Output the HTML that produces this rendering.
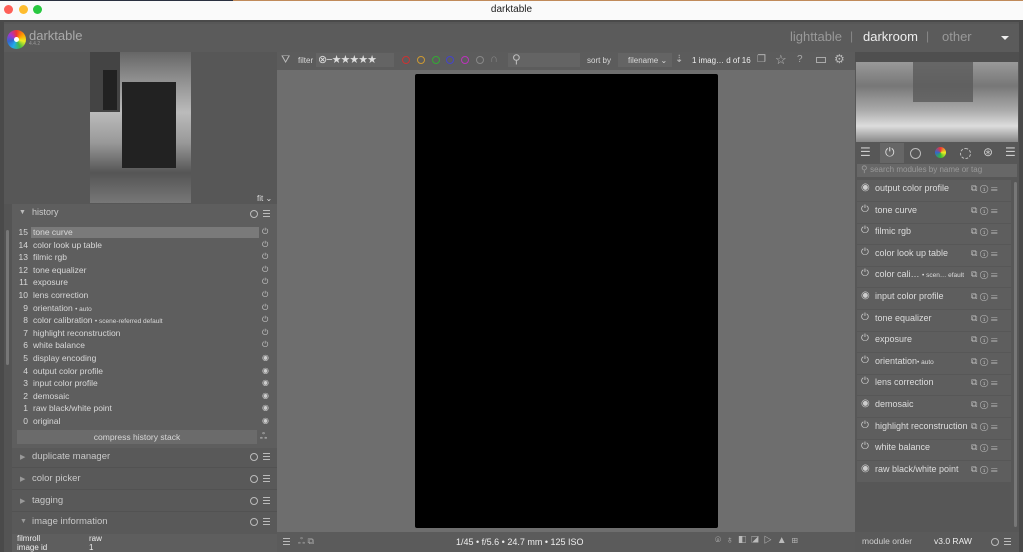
<!DOCTYPE html>
<html><head><meta charset="utf-8"><style>
*{margin:0;padding:0;box-sizing:border-box}
body{width:1023px;height:552px;overflow:hidden;background:#575757;font-family:"Liberation Sans",sans-serif;color:#d8d8d8;position:relative;font-size:9px}
.a{position:absolute}
.t{position:absolute;white-space:nowrap}
.ham{position:absolute;width:7px;height:7px;border-top:1px solid #bbb;border-bottom:1px solid #bbb}
.ham:after{content:"";position:absolute;left:0;right:0;top:2px;border-top:1px solid #bbb}
.circ{position:absolute;width:8px;height:8px;border:1px solid #bbb;border-radius:50%}
.hr{position:absolute;left:14px;width:250px;height:12px;font-size:8.5px;line-height:12px;white-space:nowrap}
.hr b{font-weight:normal;display:inline-block;width:14px;text-align:right;margin-right:5px}
.hr i{font-style:normal;position:absolute;left:248px;color:#ccc;font-size:8px}
.s{font-size:6.5px}
.mr{position:absolute;left:857px;width:154px;height:21px;border-bottom:1px solid #575757;font-size:9px;line-height:14px;white-space:nowrap}
.mr b{font-weight:normal;position:absolute;left:4px;top:0;color:#ccc;font-size:10px}
.mr span.n{position:absolute;left:18px;top:0;color:#ddd}
.mr i{font-style:normal;position:absolute;left:114px;top:0;color:#bbb;font-size:9px}
</style></head><body>
<div class="a" style="left:0;top:0;width:1023px;height:20px;background:#fafafa"></div>
<div class="a" style="left:0;top:0;width:233px;height:1px;background:#2a3040"></div>
<div class="a" style="left:233px;top:0;width:790px;height:1px;background:#c08a5a"></div>
<div class="a" style="left:4px;top:5px;width:9px;height:9px;border-radius:50%;background:#fe5f57"></div>
<div class="a" style="left:19px;top:5px;width:9px;height:9px;border-radius:50%;background:#febc2e"></div>
<div class="a" style="left:33px;top:5px;width:9px;height:9px;border-radius:50%;background:#28c840"></div>
<div class="t" style="left:0;width:1023px;text-align:center;top:4px;font-size:10px;color:#222">darktable</div>
<div class="a" style="left:0;top:20px;width:1023px;height:2px;background:#4a4a4a"></div>
<div class="a" style="left:4px;top:24px;width:1015px;height:28px;background:#5b5b5b"></div>
<div class="a" style="left:7px;top:30px;width:19px;height:19px;border-radius:50%;background:conic-gradient(#e33,#f90,#ee2,#4b4,#2ae,#36c,#a3c,#e33)"></div>
<div class="a" style="left:14px;top:37px;width:5px;height:5px;background:#fff;border-radius:50%"></div>
<div class="t" style="left:29px;top:28px;font-size:13px;color:#aaa">darktable</div>
<div class="t" style="left:29px;top:41px;font-size:5px;color:#999">4.4.2</div>
<div class="t" style="left:790px;top:29px;font-size:13px;color:#999">lighttable</div>
<div class="t" style="left:850px;top:29px;font-size:12px;color:#888">|</div>
<div class="t" style="left:863px;top:29px;font-size:13px;color:#eee">darkroom</div>
<div class="t" style="left:926px;top:29px;font-size:12px;color:#888">|</div>
<div class="t" style="left:942px;top:29px;font-size:13px;color:#999">other</div>
<div class="a" style="left:1001px;top:36px;border-left:4px solid transparent;border-right:4px solid transparent;border-top:4px solid #eee"></div>
<!-- left -->
<div class="a" style="left:4px;top:52px;width:273px;height:152px;background:#575757"></div>
<div class="a" style="left:90px;top:52px;width:101px;height:151px;background:linear-gradient(180deg,#666 0%,#888 15%,#bbb 40%,#999 60%,#555 80%,#777 100%)"></div>
<div class="a" style="left:90px;top:52px;width:30px;height:60px;background:#444"></div>
<div class="a" style="left:122px;top:82px;width:54px;height:86px;background:#222"></div>
<div class="a" style="left:103px;top:70px;width:14px;height:40px;background:#222"></div>
<div class="t" style="left:257px;top:194px;font-size:8px;color:#ddd">fit ⌄</div>
<div class="a" style="left:4px;top:204px;width:273px;height:348px;background:#545454"></div>
<div class="a" style="left:12px;top:204px;width:265px;height:244px;background:#5e5e5e"></div>
<div class="a" style="left:6px;top:230px;width:3px;height:135px;background:#777;border-radius:2px"></div>
<div class="a" style="left:0;top:283px;border-top:4px solid transparent;border-bottom:4px solid transparent;border-right:4px solid #eee"></div>
<div class="t" style="left:19px;top:209px;font-size:7px;color:#bbb">▼</div>
<div class="t" style="left:32px;top:207px;font-size:9px;color:#ccc">history</div>
<div class="circ" style="left:250px;top:210px"></div><div class="ham" style="left:263px;top:210px"></div>
<div class="a" style="left:31px;top:227px;width:228px;height:11px;background:#7a7a7a"></div>
<div class="hr" style="top:226px"><b>15</b>tone curve<i>⏻</i></div>
<div class="hr" style="top:238.6px"><b>14</b>color look up table<i>⏻</i></div>
<div class="hr" style="top:251.2px"><b>13</b>filmic rgb<i>⏻</i></div>
<div class="hr" style="top:263.8px"><b>12</b>tone equalizer<i>⏻</i></div>
<div class="hr" style="top:276.4px"><b>11</b>exposure<i>⏻</i></div>
<div class="hr" style="top:289px"><b>10</b>lens correction<i>⏻</i></div>
<div class="hr" style="top:301.6px"><b>9</b>orientation <span class="s">• auto</span><i>⏻</i></div>
<div class="hr" style="top:314.2px"><b>8</b>color calibration <span class="s">• scene-referred default</span><i>⏻</i></div>
<div class="hr" style="top:326.8px"><b>7</b>highlight reconstruction<i>⏻</i></div>
<div class="hr" style="top:339.4px"><b>6</b>white balance<i>⏻</i></div>
<div class="hr" style="top:352px"><b>5</b>display encoding<i>◉</i></div>
<div class="hr" style="top:364.6px"><b>4</b>output color profile<i>◉</i></div>
<div class="hr" style="top:377.2px"><b>3</b>input color profile<i>◉</i></div>
<div class="hr" style="top:389.8px"><b>2</b>demosaic<i>◉</i></div>
<div class="hr" style="top:402.4px"><b>1</b>raw black/white point<i>◉</i></div>
<div class="hr" style="top:415px"><b>0</b>original<i>◉</i></div>
<div class="a" style="left:17px;top:430px;width:240px;height:14px;background:#6b6b6b"></div>
<div class="t" style="left:17px;top:432px;width:240px;text-align:center;font-size:8.5px">compress history stack</div>
<div class="t" style="left:260px;top:431px;font-size:9px;color:#ccc">ஃ</div>
<div class="a" style="left:12px;top:448px;width:265px;height:86px;background:#595959"></div>
<div class="a" style="left:12px;top:467px;width:265px;height:1px;background:#525252"></div>
<div class="a" style="left:12px;top:489px;width:265px;height:1px;background:#525252"></div>
<div class="a" style="left:12px;top:511px;width:265px;height:1px;background:#525252"></div>
<div class="t" style="left:20px;top:453px;font-size:7px;color:#999">▶</div>
<div class="t" style="left:20px;top:475px;font-size:7px;color:#999">▶</div>
<div class="t" style="left:20px;top:497px;font-size:7px;color:#999">▶</div>
<div class="t" style="left:20px;top:518px;font-size:7px;color:#999">▼</div>
<div class="t" style="left:32px;top:451px;font-size:9.5px;color:#c8c8c8">duplicate manager</div>
<div class="t" style="left:32px;top:473px;font-size:9.5px;color:#c8c8c8">color picker</div>
<div class="t" style="left:32px;top:495px;font-size:9.5px;color:#c8c8c8">tagging</div>
<div class="t" style="left:32px;top:516px;font-size:9.5px;color:#c8c8c8">image information</div>
<div class="circ" style="left:250px;top:453px"></div><div class="ham" style="left:263px;top:453px"></div>
<div class="circ" style="left:250px;top:475px"></div><div class="ham" style="left:263px;top:475px"></div>
<div class="circ" style="left:250px;top:497px"></div><div class="ham" style="left:263px;top:497px"></div>
<div class="circ" style="left:250px;top:518px"></div><div class="ham" style="left:263px;top:518px"></div>
<div class="a" style="left:12px;top:534px;width:265px;height:18px;background:#5e5e5e"></div>
<div class="t" style="left:17px;top:535px;font-size:8px;line-height:8.5px;color:#eee">filmroll<br>image id</div>
<div class="t" style="left:89px;top:535px;font-size:8px;line-height:8.5px;color:#eee">raw<br>1</div>
<!-- center -->
<div class="a" style="left:277px;top:52px;width:578px;height:18px;background:#5c5c5c"></div>
<div class="a" style="left:277px;top:70px;width:578px;height:462px;background:#6e6e6e"></div>
<div class="a" style="left:415px;top:74px;width:303px;height:454px;background:#000;border-radius:2px"></div>
<div class="t" style="left:281px;top:54px;font-size:11px;color:#bbb">⛛</div>
<div class="t" style="left:298px;top:56px;font-size:8px">filter</div>
<div class="a" style="left:316px;top:53px;width:78px;height:14px;background:#646464"></div>
<div class="t" style="left:318px;top:53px;font-size:11px;color:#ddd;letter-spacing:-1px">⊗−★★★★★</div>
<div class="circ" style="left:402px;top:56px;border-color:#c33"></div>
<div class="circ" style="left:417px;top:56px;border-color:#c93"></div>
<div class="circ" style="left:432px;top:56px;border-color:#3a3"></div>
<div class="circ" style="left:446px;top:56px;border-color:#44c"></div>
<div class="circ" style="left:461px;top:56px;border-color:#b3b"></div>
<div class="circ" style="left:476px;top:56px;border-color:#888"></div>
<div class="t" style="left:490px;top:53px;font-size:11px;color:#888">∩</div>
<div class="a" style="left:508px;top:53px;width:72px;height:14px;background:#646464"></div>
<div class="t" style="left:512px;top:52px;font-size:12px;color:#bbb">⚲</div>
<div class="t" style="left:587px;top:56px;font-size:8px">sort by</div>
<div class="a" style="left:618px;top:53px;width:54px;height:14px;background:#646464"></div>
<div class="t" style="left:628px;top:56px;font-size:8px">filename ⌄</div>
<div class="t" style="left:675px;top:54px;font-size:10px;color:#bbb">⇣</div>
<div class="t" style="left:692px;top:56px;font-size:8px;color:#eee">1 imag… d of 16</div>
<div class="t" style="left:757px;top:54px;font-size:10px;color:#bbb">❐</div>
<div class="t" style="left:775px;top:52px;font-size:13px;color:#bbb">☆</div>
<div class="t" style="left:797px;top:54px;font-size:10px;color:#aaa">?</div>
<div class="a" style="left:816px;top:57px;width:10px;height:6px;border:1px solid #aaa"></div>
<div class="t" style="left:834px;top:52px;font-size:12px;color:#bbb">⚙</div>
<div class="a" style="left:277px;top:532px;width:578px;height:20px;background:#5b5b5b"></div>
<div class="ham" style="left:283px;top:538px"></div>
<div class="t" style="left:298px;top:536px;font-size:9px;color:#aaa">ஃ ⧉</div>
<div class="t" style="left:456px;top:537px;font-size:9px;color:#eee">1/45 • f/5.6 • 24.7 mm • 125 ISO</div>
<div class="t" style="left:715px;top:535px;font-size:10px;color:#bbb;letter-spacing:5px">⌾♁◧◪▷▲⊞</div>
<!-- right -->
<div class="a" style="left:855px;top:52px;width:164px;height:500px;background:#575757"></div>
<div class="a" style="left:855px;top:52px;width:164px;height:10px;background:#4f4f4f"></div>
<div class="a" style="left:856px;top:62px;width:162px;height:80px;background:linear-gradient(180deg,#999 0%,#777 30%,#aaa 60%,#ddd 80%,#888 100%)"></div>
<div class="a" style="left:913px;top:62px;width:60px;height:40px;background:#5a5a5a;opacity:.8"></div>
<div class="a" style="left:880px;top:143px;width:24px;height:20px;background:#666"></div>
<div class="t" style="left:860px;top:145px;font-size:12px;color:#ccc">☰</div>
<div class="t" style="left:885px;top:145px;font-size:12px;color:#ddd">⏻</div>
<div class="circ" style="left:910px;top:148px;width:11px;height:11px"></div>
<div class="a" style="left:935px;top:147px;width:11px;height:11px;border-radius:50%;background:conic-gradient(#e33,#ee2,#3b3,#36c,#e33)"></div>
<div class="circ" style="left:960px;top:148px;width:11px;height:11px;border-style:dashed"></div>
<div class="t" style="left:983px;top:145px;font-size:12px;color:#ccc">⊛</div>
<div class="t" style="left:1005px;top:145px;font-size:12px;color:#ccc">☰</div>
<div class="a" style="left:857px;top:164px;width:160px;height:13px;background:#676767"></div>
<div class="t" style="left:861px;top:164px;font-size:9px;color:#999">⚲ <span style="font-size:8px">search modules by name or tag</span></div>
<div class="a" style="left:857px;top:180px;width:154px;height:302px;background:#5e5e5e"></div>
<div class="a" style="left:1014px;top:182px;width:3px;height:345px;background:#777;border-radius:2px"></div>
<div class="mr" style="top:181px"><b>◉</b><span class="n">output color profile</span><i>⧉ ⓘ ☰</i></div>
<div class="mr" style="top:202.6px"><b>⏻</b><span class="n">tone curve</span><i>⧉ ⓘ ☰</i></div>
<div class="mr" style="top:224.2px"><b>⏻</b><span class="n">filmic rgb</span><i>⧉ ⓘ ☰</i></div>
<div class="mr" style="top:245.8px"><b>⏻</b><span class="n">color look up table</span><i>⧉ ⓘ ☰</i></div>
<div class="mr" style="top:267.4px"><b>⏻</b><span class="n">color cali… <span class="s">• scen… efault</span></span><i>⧉ ⓘ ☰</i></div>
<div class="mr" style="top:289px"><b>◉</b><span class="n">input color profile</span><i>⧉ ⓘ ☰</i></div>
<div class="mr" style="top:310.6px"><b>⏻</b><span class="n">tone equalizer</span><i>⧉ ⓘ ☰</i></div>
<div class="mr" style="top:332.2px"><b>⏻</b><span class="n">exposure</span><i>⧉ ⓘ ☰</i></div>
<div class="mr" style="top:353.8px"><b>⏻</b><span class="n">orientation<span class="s">• auto</span></span><i>⧉ ⓘ ☰</i></div>
<div class="mr" style="top:375.4px"><b>⏻</b><span class="n">lens correction</span><i>⧉ ⓘ ☰</i></div>
<div class="mr" style="top:397px"><b>◉</b><span class="n">demosaic</span><i>⧉ ⓘ ☰</i></div>
<div class="mr" style="top:418.6px"><b>⏻</b><span class="n">highlight reconstruction</span><i>⧉ ⓘ ☰</i></div>
<div class="mr" style="top:440.2px"><b>⏻</b><span class="n">white balance</span><i>⧉ ⓘ ☰</i></div>
<div class="mr" style="top:461.8px"><b>◉</b><span class="n">raw black/white point</span><i>⧉ ⓘ ☰</i></div>
<div class="a" style="left:855px;top:532px;width:164px;height:20px;background:#5a5a5a"></div>
<div class="t" style="left:862px;top:536px;font-size:8.5px;color:#ccc">module order</div>
<div class="t" style="left:934px;top:536px;font-size:8.5px;color:#eee">v3.0 RAW</div>
<div class="circ" style="left:991px;top:538px"></div><div class="ham" style="left:1004px;top:538px"></div>
<div class="a" style="left:1019px;top:22px;width:4px;height:530px;background:#4a4a4a"></div>
<div class="a" style="left:0;top:22px;width:4px;height:530px;background:#4a4a4a"></div>
</body></html>
